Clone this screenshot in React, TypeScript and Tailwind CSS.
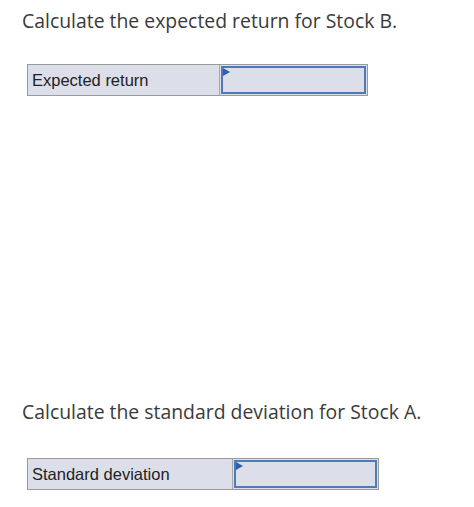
import React from "react";

function Field({ label, variant }: { label: string; variant: "a" | "b" }) {
  return (
    <div
      className={
        "flex h-[32px] border border-[#9a9a9a] bg-[#dcdfea] " +
        (variant === "a" ? "w-[341px]" : "w-[352px]")
      }
    >
      <div
        className={
          "flex items-center pl-[4px] pt-[1px] border-r border-[#a8a8a8] text-[16.5px] text-[#222] " +
          (variant === "a" ? "w-[192px]" : "w-[205px]")
        }
        style={{ fontFamily: '"Liberation Sans", Arial, sans-serif' }}
      >
        {label}
      </div>
      <div className="flex-1 p-[1px]">
        <div className="relative h-full border-2 border-[#4f7ab8] bg-[#dcdfea]">
          <svg className="absolute left-0 top-0" width="8" height="9" viewBox="0 0 8 9">
            <polygon points="0,0 7,4 0,8" fill="#2d5fb0" />
          </svg>
        </div>
      </div>
    </div>
  );
}

export default function App() {
  return (
    <div
      className="w-[474px] h-[507px] bg-white pl-[22px] pt-[7px]"
      style={{ fontFamily: '"Open Sans", "Noto Sans", sans-serif' }}
    >
      <h1 className="text-[19.4px] leading-[28px] text-[#3a3a3a]">Calculate the expected return for Stock B.</h1>
      <div className="mt-[29px] pl-[5px]">
        <Field label="Expected return" variant="a" />
      </div>
      <h1 className="mt-[302px] text-[19.4px] leading-[28px] text-[#3a3a3a]">
        Calculate the standard deviation for Stock A.
      </h1>
      <div className="mt-[32px] pl-[5px]">
        <Field label="Standard deviation" variant="b" />
      </div>
    </div>
  );
}
